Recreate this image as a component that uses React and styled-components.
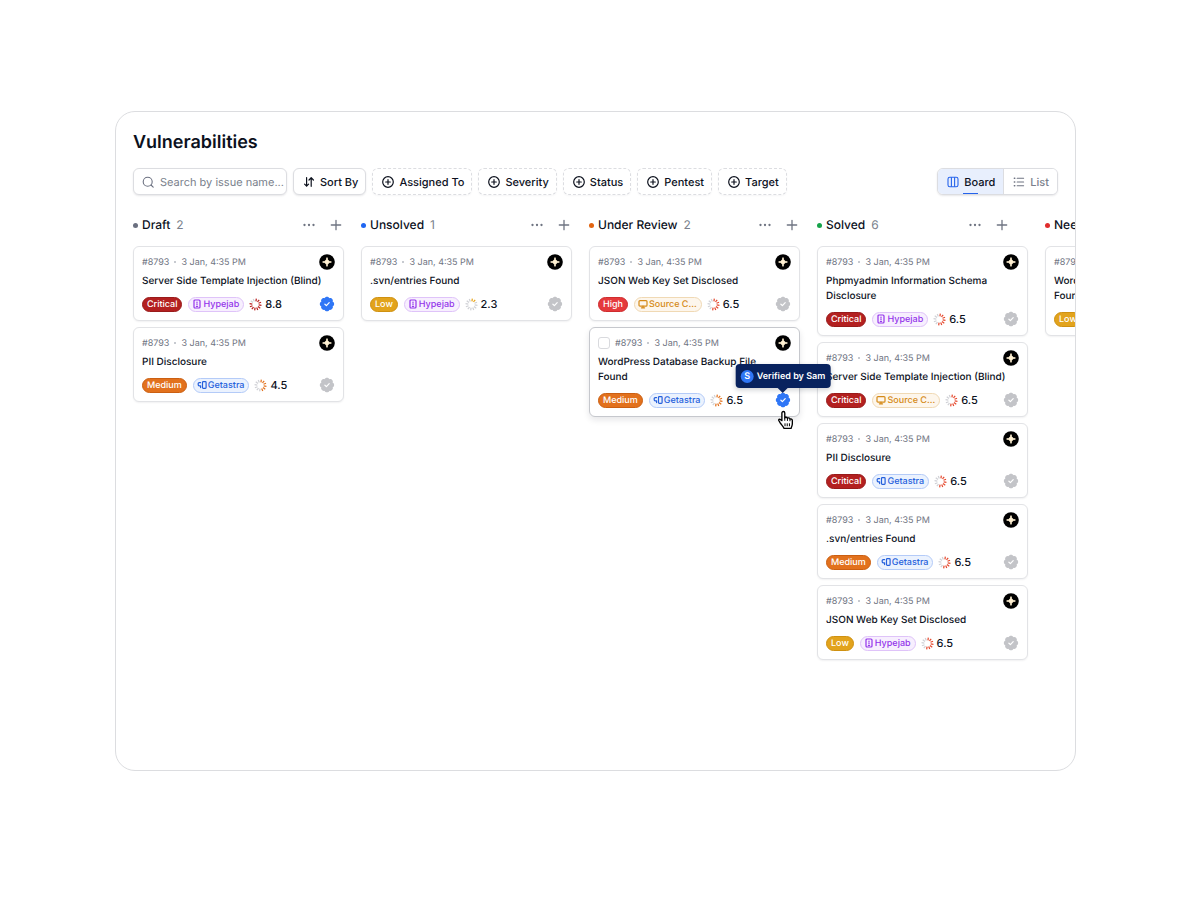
import React from "react";
import styled, { createGlobalStyle, css } from "styled-components";

const GlobalStyle = createGlobalStyle`
  *, *::before, *::after { box-sizing: border-box; }
  body {
    margin: 0;
    background: #fff;
    color: #0c111d;
    font-family: Inter, "Liberation Sans", sans-serif;
    font-size: 11px;
    text-rendering: geometricPrecision;
    -webkit-font-smoothing: antialiased;
  }
  button, input { font: inherit; color: inherit; text-rendering: inherit; }
  h1, h2, h3, p, ul { margin: 0; padding: 0; }
  ul { list-style: none; }
`;

const Page = styled.main`
  padding: 111px 124px 129px 115px;
`;

const Panel = styled.section`
  display: flex;
  flex-direction: column;
  min-height: 660px;
  padding: 19px 0 18px 17px;
  border: 1px solid #dcdde0;
  border-radius: 20px;
  overflow: hidden;
`;

const Title = styled.h1`
  font-size: 18px;
  line-height: 24px;
  font-weight: 600;
`;

const Toolbar = styled.div`
  display: flex;
  align-items: center;
  gap: 6px;
  margin-top: 13px;
  padding-right: 17px;
`;

const control = css`
  display: flex;
  align-items: center;
  height: 27px;
  border: 1px solid #dcdde1;
  border-radius: 6px;
  background: #fff;
  box-shadow: 0 1px 2px rgba(16, 24, 40, 0.1);
`;

const SearchField = styled.label`
  ${control}
  width: 154px;
  padding: 0 1px 0 7px;
  gap: 5px;
  color: #6b7080;
  svg { flex: none; }
`;

const SearchInput = styled.input`
  flex: 1;
  min-width: 0;
  padding: 0;
  border: 0;
  outline: 0;
  background: none;
  &::placeholder { color: #7a7f8c; opacity: 1; }
`;

const ToolButton = styled.button`
  ${control}
  padding: 0 7px 0 8px;
  gap: 4px;
  font-weight: 500;
  white-space: nowrap;
  ${(p) => p.$dashed && css`
    border-style: dashed;
    box-shadow: 0 1px 2px rgba(16, 24, 40, 0.04);
  `}
`;

const Segmented = styled.div`
  ${control}
  margin-left: auto;
  overflow: hidden;
`;

const Segment = styled.button`
  position: relative;
  display: flex;
  align-items: center;
  gap: 4px;
  height: 100%;
  padding: 0 8px;
  border: 0;
  background: ${(p) => (p.$active ? "#e8effd" : "#fff")};
  color: ${(p) => (p.$active ? "#0c111d" : "#7a7f8c")};
  font-weight: 500;
  & + & { border-left: 1px solid #dcdde1; }
  ${(p) => p.$active && css`
    &::after {
      content: "";
      position: absolute;
      left: 25px;
      bottom: 0;
      width: 15px;
      height: 1px;
      background: #2563eb;
    }
  `}
`;

const Board = styled.div`
  display: flex;
  gap: 17px;
  margin-top: 20px;
`;

const Column = styled.section`
  flex: 0 0 211px;
`;

const ColumnHeader = styled.header`
  display: flex;
  align-items: center;
  height: 20px;
  padding-right: ${(p) => (p.$inset ? "19px" : "1px")};
`;

const Dot = styled.span`
  width: 5px;
  height: 5px;
  margin-right: 4px;
  border-radius: 50%;
  background: ${(p) => p.$color};
`;

const ColumnTitle = styled.h2`
  font-size: 12px;
  font-weight: 500;
  line-height: 20px;
`;

const Count = styled.span`
  margin-left: 6px;
  margin-right: auto;
  font-size: 12px;
  line-height: 20px;
  color: #7a7f8c;
`;

const IconButton = styled.button`
  display: flex;
  margin-left: 13px;
  padding: 0;
  border: 0;
  background: none;
  color: #6f7482;
`;

const CardList = styled.ul`
  display: flex;
  flex-direction: column;
  gap: 6px;
  margin-top: 11px;
`;

const CardBox = styled.li`
  padding: 7px 8px 8px;
  border: 1px solid ${(p) => (p.$hovered ? "#c6c8cd" : "#e2e3e6")};
  border-radius: 6px;
  background: #fff;
  box-shadow: ${(p) =>
    p.$hovered ? "0 3px 6px rgba(16, 24, 40, 0.1)" : "0 1px 2px rgba(16, 24, 40, 0.06)"};
`;

const MetaRow = styled.div`
  display: flex;
  align-items: center;
  height: 16px;
  gap: 5px;
  font-size: 9px;
  color: #6f7482;
  svg { margin-left: auto; }
`;

const MetaDot = styled.span`
  width: 2px;
  height: 2px;
  border-radius: 50%;
  background: #b5b8c0;
`;

const Tick = styled.input`
  appearance: none;
  width: 12px;
  height: 12px;
  margin: 0;
  border: 1px solid #d9dade;
  border-radius: 3px;
  background: #fff;
`;

const CardTitle = styled.h3`
  margin-top: 4px;
  padding-right: 12px;
  font-size: 10px;
  line-height: 15px;
  font-weight: 500;
`;

const TagRow = styled.div`
  display: flex;
  align-items: center;
  height: 16px;
  margin-top: 7px;
`;

const tag = css`
  display: flex;
  align-items: center;
  height: 15px;
  border: 1px solid;
  border-radius: 8px;
  font-size: 9px;
  font-weight: 500;
  white-space: nowrap;
`;

const severities = {
  Critical: ["#b32020", "#991b1b"],
  High: ["#e53a3c", "#cf2c2e"],
  Medium: ["#e2711d", "#cb5f12"],
  Low: ["#e2a31c", "#cf9110"],
};

const Severity = styled.span`
  ${tag}
  padding: 0 4px;
  color: #fff;
  background: ${(p) => severities[p.$level][0]};
  border-color: ${(p) => severities[p.$level][1]};
`;

const targets = {
  Hypejab: ["#9333ea", "#f7effe", "#dfc3f9"],
  Getastra: ["#2560dc", "#ebf2fe", "#b4cbf8"],
  "Source C...": ["#d58a17", "#fdf6ec", "#f0d9b4"],
};

const Target = styled.span`
  ${tag}
  gap: 1px;
  margin-left: 6px;
  padding: 0 4px 0 3px;
  color: ${(p) => targets[p.$name][0]};
  background: ${(p) => targets[p.$name][1]};
  border-color: ${(p) => targets[p.$name][2]};
`;

const Score = styled.span`
  display: flex;
  align-items: center;
  gap: 3px;
  margin-left: 5px;
  font-weight: 500;
`;

const Verify = styled.button`
  position: relative;
  display: flex;
  margin-left: auto;
  padding: 0;
  border: 0;
  background: none;
  color: ${(p) => (p.$on ? "#2f76f6" : "#c3c4c8")};
`;

const Tooltip = styled.span`
  position: absolute;
  z-index: 2;
  bottom: 20px;
  left: 50%;
  transform: translateX(-50%);
  display: flex;
  align-items: center;
  gap: 3px;
  height: 24px;
  padding: 0 5px;
  border-radius: 4px;
  background: #08225e;
  box-shadow: 0 2px 5px rgba(16, 24, 40, 0.2);
  color: #fff;
  font-size: 9px;
  font-weight: 600;
  white-space: nowrap;
  &::after {
    content: "";
    position: absolute;
    top: 100%;
    left: 50%;
    margin-left: -5px;
    border: 5px solid transparent;
    border-top-color: #08225e;
  }
`;

const Initial = styled.span`
  display: grid;
  place-items: center;
  width: 13px;
  height: 13px;
  border-radius: 50%;
  background: #2f76f6;
`;

const Pointer = styled.svg`
  position: absolute;
  z-index: 3;
  top: 18px;
  left: 1px;
`;

const SearchIcon = () => (
  <svg width="14" height="14" viewBox="0 0 14 14" fill="none" stroke="currentColor" strokeWidth="1.1" strokeLinecap="round">
    <circle cx="6.7" cy="6.7" r="4.5" />
    <path d="M10 10l2.2 2.2" />
  </svg>
);

const SortIcon = () => (
  <svg width="14" height="14" viewBox="0 0 14 14" fill="none" stroke="currentColor" strokeWidth="1.2" strokeLinecap="round" strokeLinejoin="round">
    <path d="M4.6 2.6v8.6M2.6 9.2l2 2 2-2M9.2 11.3V2.8M7 5l2.2-2.3L11.4 5" />
  </svg>
);

const PlusCircle = () => (
  <svg width="14" height="14" viewBox="0 0 14 14" fill="none" stroke="currentColor" strokeWidth="1.2" strokeLinecap="round">
    <circle cx="7" cy="7" r="5.3" />
    <path d="M7 4.7v4.6M4.7 7h4.6" />
  </svg>
);

const BoardIcon = () => (
  <svg width="14" height="14" viewBox="0 0 14 14" fill="none" stroke="#2563eb" strokeWidth="1.1">
    <rect x="2" y="2.2" width="10" height="9.6" rx="1.8" />
    <path d="M5.4 2.2v9.6M8.6 2.2v9.6" />
  </svg>
);

const ListIcon = () => (
  <svg width="14" height="14" viewBox="0 0 14 14" fill="none" stroke="#6f7482" strokeWidth="1.1" strokeLinecap="round">
    <path d="M5.2 3.3h6.4M5.2 7h6.4M5.2 10.7h6.4" />
    <path d="M2.3 3.3h.5M2.3 7h.5M2.3 10.7h.5" strokeWidth="1.4" />
  </svg>
);

const MoreIcon = () => (
  <svg width="14" height="14" viewBox="0 0 14 14" fill="currentColor">
    <circle cx="2.5" cy="7" r="1.15" />
    <circle cx="7" cy="7" r="1.15" />
    <circle cx="11.5" cy="7" r="1.15" />
  </svg>
);

const AddIcon = () => (
  <svg width="14" height="14" viewBox="0 0 14 14" fill="none" stroke="currentColor" strokeWidth="1.3" strokeLinecap="round">
    <path d="M7 2.3v9.4M2.3 7h9.4" />
  </svg>
);

const AvatarIcon = () => (
  <svg width="16" height="16" viewBox="0 0 16 16" role="img" aria-label="Assignee">
    <circle cx="8" cy="8" r="7.8" fill="#000" />
    <path d="M8 3.6C8.5 6.4 9.6 7.5 12.4 8 9.6 8.5 8.5 9.6 8 12.4 7.5 9.6 6.4 8.5 3.6 8 6.4 7.5 7.5 6.4 8 3.6Z" fill="#fff0d2" stroke="#fff0d2" strokeWidth=".9" />
  </svg>
);

const targetIcons = {
  Hypejab: (
    <>
      <rect x="2" y="1" width="6" height="8" rx="1" />
      <path d="M5 3v.6M5 4.9v.6M4.4 7.3h1.2" />
    </>
  ),
  Getastra: (
    <>
      <rect x="5.5" y="1.6" width="3.6" height="6.8" rx=".8" />
      <path d="M3.6 2.6H2.2a1 1 0 0 0-1 1v1.2a1 1 0 0 0 1 1h1.4M3.6 5.8v1.8" />
    </>
  ),
  "Source C...": (
    <>
      <rect x="1" y="1.6" width="8" height="5.6" rx="1" />
      <path d="M3.4 8.8h3.2M5 7.2v1.4" />
    </>
  ),
};

const TargetIcon = ({ name }) => (
  <svg width="10" height="10" viewBox="0 0 10 10" fill="none" stroke="currentColor" strokeWidth="1.2" strokeLinecap="round" strokeLinejoin="round">
    {targetIcons[name]}
  </svg>
);

const Gauge = ({ filled, color }) => (
  <svg width="13" height="13" viewBox="-6.5 -6.5 13 13" strokeWidth="1.2" strokeLinecap="butt">
    {Array.from({ length: 12 }, (_, i) => (
      <path key={i} d="M0-6v2.8" transform={`rotate(${i * 30 + 8})`} stroke={i < filled ? color : "#cfd0d5"} />
    ))}
  </svg>
);

const lobes = Array.from({ length: 8 }, (_, i) => {
  const a = (i * Math.PI) / 4 + Math.PI / 8;
  const b = a + Math.PI / 4;
  const at = (t, r) => `${(7 + r * Math.cos(t)).toFixed(2)} ${(7 + r * Math.sin(t)).toFixed(2)}`;
  return `${i ? "" : `M${at(a, 6.1)}`}C${at(a + 0.15, 7.9)} ${at(b - 0.15, 7.9)} ${at(b, 6.1)}`;
}).join("");

const VerifiedIcon = () => (
  <svg width="16" height="16" viewBox="-1 -1 16 16">
    <path d={`${lobes}Z`} fill="currentColor" />
    <path d="M4.9 7.2l1.5 1.4 2.8-2.9" fill="none" stroke="#fff" strokeWidth="1.2" strokeLinecap="round" strokeLinejoin="round" />
  </svg>
);

const HandPointer = () => (
  <Pointer width="18" height="20" viewBox="0 0 16 18" aria-hidden="true">
    <path
      d="M5.2 2.8c0-1.9 2.6-1.9 2.6 0v4.4c.3-1 2.3-.9 2.4.4.5-.8 2.2-.6 2.3.7.7-.6 2.1-.2 2.1 1.2v3.2c0 1.4-.9 2.2-1 3.8H7.1c-.2-1.3-2.6-3.5-3.7-5.4-.4-.8-1.4-1.6-1.1-2.3.5-.9 1.8-.4 2.9.8Z"
      fill="#fff" stroke="#000" strokeWidth="1.2" strokeLinejoin="round"
    />
    <path d="M7.8 7.2v2.5M10.2 7.8v2M12.5 8.5v1.6M8 12v2.6M10 12v2.6M12 12v2.6" stroke="#000" strokeWidth=".9" />
  </Pointer>
);

const colorOf = { Critical: "#b91c1c", High: "#e5482d", Medium: "#e2711d", Low: "#e8a317" };

const c = (title, level, target, score, filled, gauge, extra) => ({ title, level, target, score, filled, gauge, ...extra });

const columns = [
  { name: "Draft", count: 2, color: "#6b7080", cards: [
    c("Server Side Template Injection (Blind)", "Critical", "Hypejab", "8.8", 10, colorOf.Critical, { verified: true }),
    c("PII Disclosure", "Medium", "Getastra", "4.5", 6, colorOf.Medium),
  ] },
  { name: "Unsolved", count: 1, color: "#1f66f2", cards: [
    c(".svn/entries Found", "Low", "Hypejab", "2.3", 2, colorOf.Low),
  ] },
  { name: "Under Review", count: 2, color: "#e2640f", cards: [
    c("JSON Web Key Set Disclosed", "High", "Source C...", "6.5", 7, colorOf.High),
    c("WordPress Database Backup File Found", "Medium", "Getastra", "6.5", 7, colorOf.Medium, { verified: true, hovered: true }),
  ] },
  { name: "Solved", count: 6, color: "#16a34a", inset: true, cards: [
    c("Phpmyadmin Information Schema Disclosure", "Critical", "Hypejab", "6.5", 7, colorOf.High),
    c("Server Side Template Injection (Blind)", "Critical", "Source C...", "6.5", 7, colorOf.High),
    c("PII Disclosure", "Critical", "Getastra", "6.5", 7, colorOf.High),
    c(".svn/entries Found", "Medium", "Getastra", "6.5", 7, colorOf.High),
    c("JSON Web Key Set Disclosed", "Low", "Hypejab", "6.5", 7, colorOf.High),
  ] },
  { name: "Need Info", count: 1, color: "#e02d2d", cards: [
    c("WordPress Database Backup File Found", "Low", "Hypejab", "6.5", 7, colorOf.High),
  ] },
];

const Card = ({ card }) => (
  <CardBox $hovered={card.hovered}>
    <MetaRow>
      {card.hovered && <Tick type="checkbox" aria-label="Select issue #8793" />}
      <span>#8793</span>
      <MetaDot />
      <span>3 Jan, 4:35 PM</span>
      <AvatarIcon />
    </MetaRow>
    <CardTitle>{card.title}</CardTitle>
    <TagRow>
      <Severity $level={card.level}>{card.level}</Severity>
      <Target $name={card.target}>
        <TargetIcon name={card.target} />
        {card.target}
      </Target>
      <Score>
        <Gauge filled={card.filled} color={card.gauge} />
        {card.score}
      </Score>
      <Verify $on={card.verified} aria-label="Verification">
        <VerifiedIcon />
        {card.hovered && (
          <>
            <Tooltip role="tooltip">
              <Initial>S</Initial>
              Verified by Sam
            </Tooltip>
            <HandPointer />
          </>
        )}
      </Verify>
    </TagRow>
  </CardBox>
);

export default function App() {
  return (
    <>
      <GlobalStyle />
      <Page>
        <Panel>
          <Title>Vulnerabilities</Title>
          <Toolbar>
            <SearchField>
              <SearchIcon />
              <SearchInput type="text" aria-label="Search" placeholder="Search by issue name..." />
            </SearchField>
            <ToolButton><SortIcon />Sort By</ToolButton>
            {["Assigned To", "Severity", "Status", "Pentest", "Target"].map((label) => (
              <ToolButton key={label} $dashed><PlusCircle />{label}</ToolButton>
            ))}
            <Segmented>
              <Segment $active><BoardIcon />Board</Segment>
              <Segment><ListIcon />List</Segment>
            </Segmented>
          </Toolbar>
          <Board>
            {columns.map((column) => (
              <Column key={column.name}>
                <ColumnHeader $inset={column.inset}>
                  <Dot $color={column.color} />
                  <ColumnTitle>{column.name}</ColumnTitle>
                  <Count>{column.count}</Count>
                  <IconButton aria-label="Column options"><MoreIcon /></IconButton>
                  <IconButton aria-label="Add issue"><AddIcon /></IconButton>
                </ColumnHeader>
                <CardList>
                  {column.cards.map((card, i) => <Card key={i} card={card} />)}
                </CardList>
              </Column>
            ))}
          </Board>
        </Panel>
      </Page>
    </>
  );
}
